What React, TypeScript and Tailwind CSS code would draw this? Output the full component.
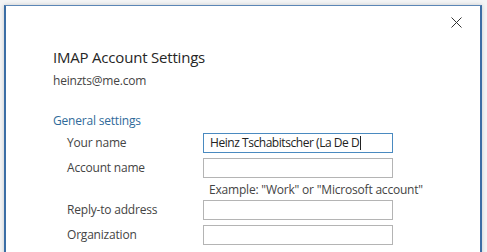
import React from 'react';

const Field = ({ label, value, focused }: { label: string; value?: string; focused?: boolean }) => (
  <div className="flex items-center h-[20px]">
    <span className="w-[150px] pl-[14px] text-[12px] tracking-[-0.2px] text-[#444]">{label}</span>
    <div
      className={`w-[190px] h-[20px] border flex items-center px-[6px] text-[12px] tracking-[-0.45px] text-[#222] ${focused ? 'border-[#4a8ac0]' : 'border-[#b4b4b4]'}`}
    >
      {value}
      {focused && <span className="w-px h-[14px] bg-[#222] ml-px" />}
    </div>
  </div>
);

const App: React.FC = () => {
  return (
    <div className="w-[487px] h-[252px] bg-[#f3f4f5] pt-[5px] pl-[4px] overflow-hidden" style={{ fontFamily: '"Open Sans", "Noto Sans", sans-serif' }}>
      <div className="w-[478px] h-[260px] bg-white border-t border-x-2 border-t-[#5b86b6] border-x-[#3b6ea5] shadow-[0_0_4px_rgba(0,0,0,0.18)] relative">
        <button className="absolute right-[18px] top-[11px] text-[#333]">
          <svg width="11" height="11" viewBox="0 0 11 11">
            <path d="M0.5 0.5 L10.5 10.5 M10.5 0.5 L0.5 10.5" stroke="#333" strokeWidth="1" />
          </svg>
        </button>
        <div className="pl-[47px] pt-[41px]">
          <h1 className="text-[15px] leading-[20px] text-[#262626] tracking-[-0.2px]">IMAP Account Settings</h1>
          <p className="mt-[6px] text-[12px] tracking-[-0.2px] leading-[16px] text-[#444]">heinzts@me.com</p>
          <h2 className="mt-[24px] text-[12px] tracking-[-0.2px] leading-[16px] text-[#2f6a9a]">General settings</h2>
          <div className="mt-[4px] flex flex-col">
            <Field label="Your name" value="Heinz Tschabitscher (La De D" focused />
            <div className="mt-[5px]"><Field label="Account name" /></div>
            <p className="ml-[156px] mt-[3px] h-[17px] text-[12px] tracking-[-0.2px] leading-[17px] text-[#444]">Example: "Work" or "Microsoft account"</p>
            <div className="mt-[2px]"><Field label="Reply-to address" /></div>
            <div className="mt-[5px]"><Field label="Organization" /></div>
          </div>
        </div>
      </div>
    </div>
  );
};

export default App;
